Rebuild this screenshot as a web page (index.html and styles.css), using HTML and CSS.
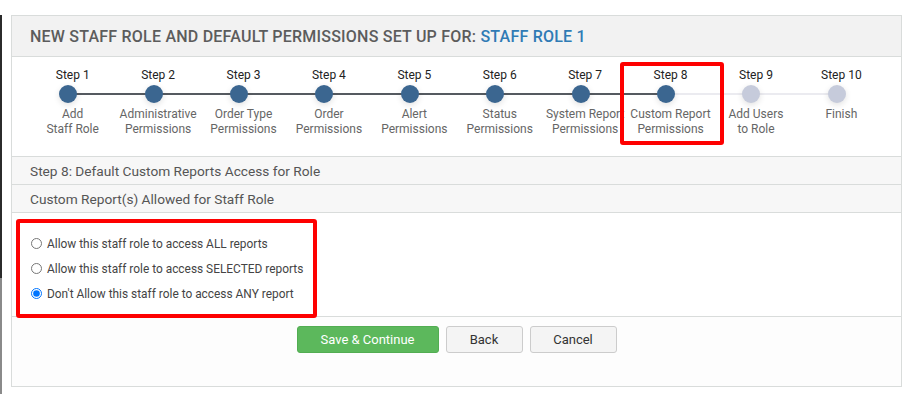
FILE: index.html
```html
<!DOCTYPE html>
<html>
<head>
<meta charset="utf-8">
<link rel="stylesheet" href="styles.css">
</head>
<body>
<div class="edge"></div>
<div class="main">
  <div class="panel">
    <div class="panel-head">NEW STAFF ROLE AND DEFAULT PERMISSIONS SET UP FOR: <span class="role">STAFF ROLE 1</span></div>
    <div class="stepper">
      <div class="step done"><div class="num">Step 1</div><div class="dot"></div><div class="lbl">Add<br>Staff Role</div></div>
      <div class="step done"><div class="num">Step 2</div><div class="dot"></div><div class="lbl">Administrative<br>Permissions</div></div>
      <div class="step done"><div class="num">Step 3</div><div class="dot"></div><div class="lbl">Order Type<br>Permissions</div></div>
      <div class="step done"><div class="num">Step 4</div><div class="dot"></div><div class="lbl">Order<br>Permissions</div></div>
      <div class="step done"><div class="num">Step 5</div><div class="dot"></div><div class="lbl">Alert<br>Permissions</div></div>
      <div class="step done"><div class="num">Step 6</div><div class="dot"></div><div class="lbl">Status<br>Permissions</div></div>
      <div class="step done"><div class="num">Step 7</div><div class="dot"></div><div class="lbl">System Report<br>Permissions</div></div>
      <div class="step done current"><div class="num">Step 8</div><div class="dot"></div><div class="lbl">Custom Report<br>Permissions</div><div class="mark"></div></div>
      <div class="step todo"><div class="num">Step 9</div><div class="dot"></div><div class="lbl">Add Users<br>to Role</div></div>
      <div class="step todo"><div class="num">Step 10</div><div class="dot"></div><div class="lbl">Finish</div></div>
    </div>
    <div class="section">Step 8: Default Custom Reports Access for Role</div>
    <div class="section">Custom Report(s) Allowed for Staff Role</div>
    <div class="options">
      <div class="radio-box">
        <label class="opt"><input type="radio" name="acc"><span>Allow this staff role to access ALL reports</span></label>
        <label class="opt"><input type="radio" name="acc"><span>Allow this staff role to access SELECTED reports</span></label>
        <label class="opt"><input type="radio" name="acc" checked><span>Don't Allow this staff role to access ANY report</span></label>
      </div>
    </div>
    <div class="actions">
      <button class="btn btn-save">Save &amp; Continue</button>
      <button class="btn btn-back">Back</button>
      <button class="btn btn-cancel">Cancel</button>
    </div>
  </div>
</div>
</body>
</html>
```
FILE: styles.css
```css
* { box-sizing: border-box; }
html, body { margin: 0; padding: 0; background: #fff; }
body {
  display: flex;
  width: 914px;
  height: 394px;
  overflow: hidden;
  font-family: Roboto, "Liberation Sans", Arial, sans-serif;
}
.edge {
  width: 2px;
  margin-top: 15px;
  background: linear-gradient(#2b2b2b 0, #2b2b2b 263px, #8a8a8a 263px, #8a8a8a 100%);
}
.main {
  padding: 15px 0 0 9px;
}
.panel {
  width: 891px;
  height: 372px;
  border: 1px solid #d9dcdb;
  background: #fdfdfd;
  display: flex;
  flex-direction: column;
}
.panel-head {
  height: 41px;
  flex: none;
  background: #f2f2f2;
  border-bottom: 1px solid #d9dcdb;
  padding: 11px 0 0 18px;
  font-size: 16px;
  font-weight: 500;
  color: #5c5c5c;
  letter-spacing: 0.22px;
}
.role { color: #2f7bb5; }

.stepper {
  display: flex;
  flex: none;
  padding: 11px 17px 0 18px;
  height: 99px;
  background: #fff;
}
.step {
  flex: 1;
  position: relative;
  display: flex;
  flex-direction: column;
  align-items: center;
  text-align: center;
}
.num {
  font-size: 12px;
  line-height: 15px;
  color: #222;
}
.dot {
  width: 18px;
  height: 18px;
  border-radius: 50%;
  margin-top: 2px;
  margin-right: 9px;
  position: relative;
  z-index: 2;
  box-shadow: 0 2px 6px rgba(0,0,0,0.12);
}
.done .dot { background: #3b6690; }
.todo .dot { background: #c6cbdb; }
.step + .step::before {
  content: "";
  position: absolute;
  top: 25px;
  left: calc(-50% - 4.5px);
  width: 100%;
  height: 2px;
  z-index: 1;
}
.done + .done::before { background: #555a60; }
.todo::before { background: #ebebf0; }
.lbl {
  margin-top: 4px;
  font-size: 12px;
  line-height: 15px;
  color: #666;
  white-space: nowrap;
}
.mark {
  position: absolute;
  left: -8px;
  top: -6px;
  width: 104px;
  height: 83px;
  border: 4px solid #fe0000;
  border-radius: 3px;
  z-index: 3;
}

.section {
  height: 28px;
  flex: none;
  background: #f7f7f7;
  border-top: 1px solid #d9dcdb;
  padding: 6px 0 0 18px;
  font-size: 13.7px;
  color: #555;
}
.options {
  border-top: 1px solid #d9dcdb;
  height: 104px;
  flex: none;
  padding: 6px 0 0 4px;
  background: #fff;
}
.radio-box {
  width: 301px;
  height: 99px;
  border: 4px solid #fe0000;
  border-radius: 3px;
  padding: 8px 0 0 10px;
  position: relative;
  z-index: 2;
}
.opt {
  display: flex;
  align-items: center;
  height: 25px;
  font-size: 11.9px;
  color: #444;
}
.opt input {
  margin: 0 5px 0 1px;
  width: 11px;
  height: 11px;
}
.actions {
  flex: 1;
  border-top: 1px solid #d9dcdb;
  display: flex;
  justify-content: center;
  gap: 7px;
  padding-top: 9px;
  background: #fdfdfd;
}
.btn {
  height: 27px;
  font-family: Roboto, "Liberation Sans", Arial, sans-serif;
  font-size: 13px;
  border-radius: 3px;
  cursor: pointer;
}
.btn-save {
  width: 142px;
  background: #5cb85c;
  border: 1px solid #52ad52;
  color: #fff;
}
.btn-back, .btn-cancel {
  background: #f4f4f4;
  border: 1px solid #ccc;
  color: #333;
}
.btn-back { width: 77px; }
.btn-cancel { width: 87px; }
```
